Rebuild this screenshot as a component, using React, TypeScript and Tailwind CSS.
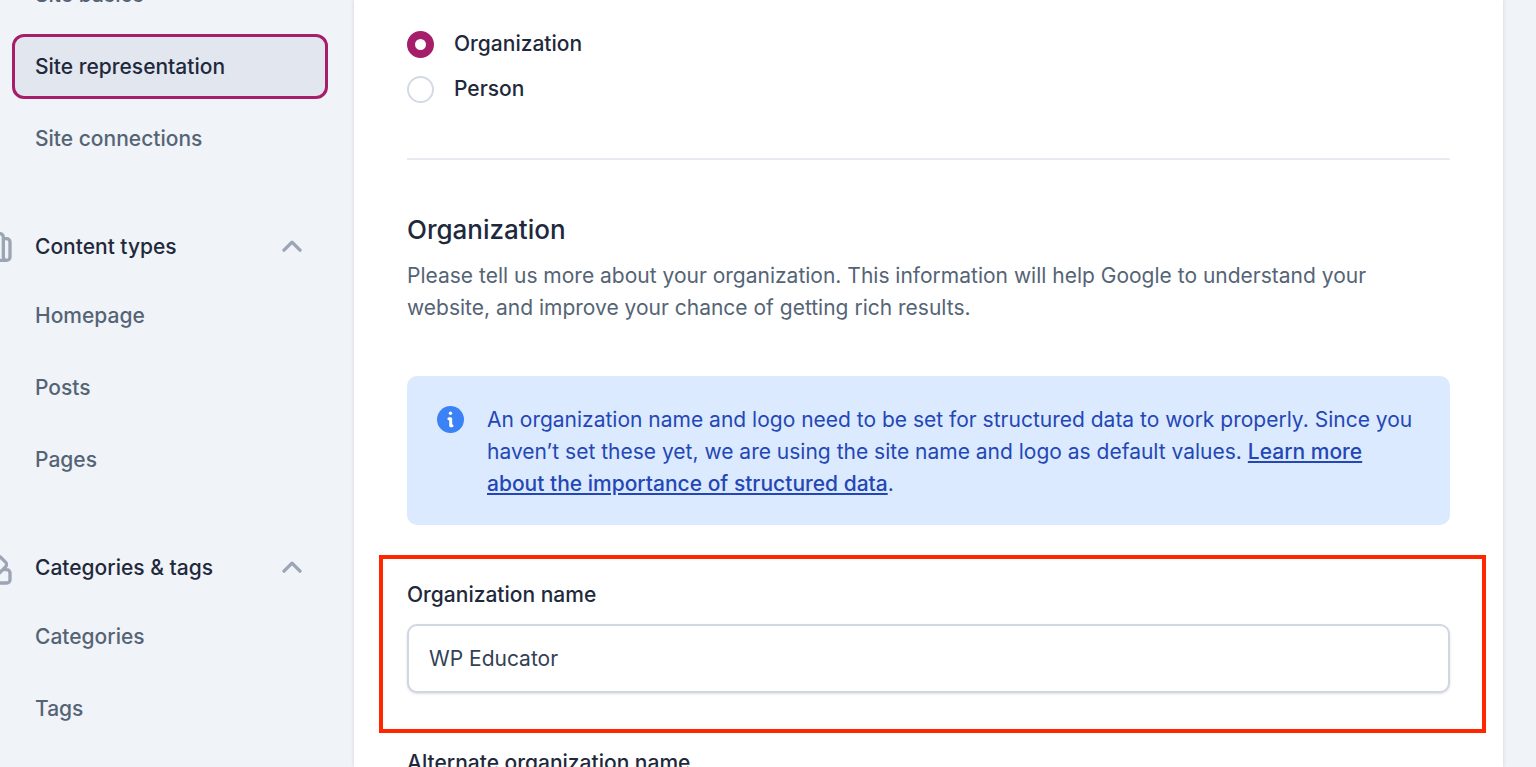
import { useState } from "react";

type NavGroup = { title: string; items: string[]; icon: "newspaper" | "swatch" };

const GROUPS: NavGroup[] = [
  { title: "Content types", items: ["Homepage", "Posts", "Pages"], icon: "newspaper" },
  { title: "Categories & tags", items: ["Categories", "Tags"], icon: "swatch" },
];

const TOP_ITEMS = ["Site basics", "Site representation", "Site connections"];

const ICON_PATHS = {
  newspaper:
    "M19 20H5a2 2 0 01-2-2V6a2 2 0 012-2h10a2 2 0 012 2v1m2 13a2 2 0 01-2-2V7m2 13a2 2 0 002-2V9a2 2 0 00-2-2h-2m-4-3H9M7 16h6M7 8h6v4H7V8z",
  swatch:
    "M7 21a4 4 0 01-4-4V5a2 2 0 012-2h4a2 2 0 012 2v12a4 4 0 01-4 4zm0 0h12a2 2 0 002-2v-4a2 2 0 00-2-2h-2.343M11 7.343l1.657-1.657a2 2 0 012.828 0l2.829 2.829a2 2 0 010 2.828l-8.486 8.485M7 17h.01",
};

function GroupIcon({ name }: { name: NavGroup["icon"] }) {
  return (
    <svg
      className="absolute -left-[37px] top-1/2 size-10 -translate-y-1/2 text-[#9ca5b3]"
      viewBox="0 0 24 24"
      fill="none"
      stroke="currentColor"
      strokeWidth="2"
      strokeLinejoin="round"
      strokeLinecap="round"
      aria-hidden="true"
    >
      <path d={ICON_PATHS[name]} />
    </svg>
  );
}

function Chevron() {
  return (
    <svg
      className="h-[14px] w-5"
      viewBox="0 0 20 14"
      fill="none"
      stroke="#9ca5b3"
      strokeWidth="3.3"
      strokeLinecap="round"
      strokeLinejoin="round"
      aria-hidden="true"
    >
      <path d="M2 10.2l8-8 8 8" />
    </svg>
  );
}

function NavItem({ label, active, onSelect }: { label: string; active: boolean; onSelect: () => void }) {
  return (
    <li>
      <a
        href="#"
        onClick={(e) => {
          e.preventDefault();
          onSelect();
        }}
        className={`flex h-[65px] items-center rounded-xl border-3 px-5 font-medium ${
          active ? "border-[#a61e69] bg-[#e2e6ef] text-[#1e293b]" : "border-transparent text-[#556475]"
        }`}
      >
        {label}
      </a>
    </li>
  );
}

export default function App() {
  const [active, setActive] = useState("Site representation");
  const [kind, setKind] = useState("Organization");
  const [closed, setClosed] = useState<string[]>([]);
  const [name, setName] = useState("WP Educator");

  const toggle = (title: string) =>
    setClosed((cur) => (cur.includes(title) ? cur.filter((t) => t !== title) : [...cur, title]));

  const renderItems = (items: string[]) => (
    <ul className="flex flex-col gap-[7px]">
      {items.map((label) => (
        <NavItem key={label} label={label} active={active === label} onSelect={() => setActive(label)} />
      ))}
    </ul>
  );

  return (
    <div className="flex h-screen overflow-hidden bg-[#f0f3f8] font-['Inter',sans-serif] text-[21px] leading-8 text-[#1e293b]">
      <aside className="w-[354px] shrink-0 pl-3 pr-[26px]">
        <nav className="-mt-[38px] flex flex-col gap-11" aria-label="Settings">
          {renderItems(TOP_ITEMS)}
          {GROUPS.map((g) => (
            <div key={g.title} className="flex flex-col gap-1">
              <button
                type="button"
                aria-expanded={!closed.includes(g.title)}
                onClick={() => toggle(g.title)}
                className="relative flex h-16 items-center justify-between pl-[23px] pr-[26px] font-medium"
              >
                <GroupIcon name={g.icon} />
                {g.title}
                <Chevron />
              </button>
              {!closed.includes(g.title) && renderItems(g.items)}
            </div>
          ))}
        </nav>
      </aside>

      <main className="mr-[33px] min-w-0 flex-1 bg-white px-[53px] shadow-[0_0_4px_rgba(30,41,59,0.14)]">
        <fieldset
          aria-label="Site represents"
          className="flex flex-col gap-[13px] border-b-2 border-[#e7eaf1] pb-[53px] pt-7"
        >
          {["Organization", "Person"].map((option) => (
            <label key={option} className="flex items-center gap-5 self-start font-medium">
              <input
                type="radio"
                name="kind"
                checked={kind === option}
                onChange={() => setKind(option)}
                className="size-[27px] appearance-none rounded-full border-2 border-[#d3dae5] bg-white checked:border-8 checked:border-[#a61e69]"
              />
              {option}
            </label>
          ))}
        </fieldset>

        <section className="pt-[54px]">
          <h2 className="text-[26px] font-medium leading-8">Organization</h2>
          <p className="mt-[14px] text-[#556475]">
            Please tell us more about your organization. This information will help Google to understand your website,
            and improve your chance of getting rich results.
          </p>

          <div className="mt-[52px] flex gap-[23px] rounded-[10px] bg-[#dbeafe] px-[30px] pb-[25px] pt-7 text-[#2447b5]">
            <svg className="mt-[2px] size-[27px] shrink-0" viewBox="0 0 27 27" aria-hidden="true">
              <circle cx="13.5" cy="13.5" r="13.5" fill="#3b82f6" />
              <circle cx="13.5" cy="7.2" r="1.7" fill="#fff" />
              <path
                d="M11.9 12.7h1.8v7h1.3"
                fill="none"
                stroke="#fff"
                strokeWidth="3"
                strokeLinecap="round"
                strokeLinejoin="round"
              />
            </svg>
            <p>
              An organization name and logo need to be set for structured data to work properly. Since you haven’t set
              these yet, we are using the site name and logo as default values.{" "}
              <a href="#" className="font-medium underline">
                Learn more about the importance of structured data
              </a>
              .
            </p>
          </div>

          <div className="-ml-7 -mr-9 mt-[30px] border-4 border-[#ff2600] pb-9 pl-6 pr-8 pt-5">
            <label htmlFor="org-name" className="block font-medium">
              Organization name
            </label>
            <input
              id="org-name"
              type="text"
              value={name}
              onChange={(e) => setName(e.target.value)}
              className="mt-[13px] h-[69px] w-full rounded-[10px] border-2 border-[#d0d7e3] bg-white px-5 text-[#334155] shadow-sm"
            />
          </div>

          <label htmlFor="alt-name" className="mt-[14px] block font-medium">
            Alternate organization name
          </label>
          <input
            id="alt-name"
            type="text"
            className="mt-[13px] h-[69px] w-full rounded-[10px] border-2 border-[#d0d7e3] px-5"
          />
        </section>
      </main>
    </div>
  );
}
